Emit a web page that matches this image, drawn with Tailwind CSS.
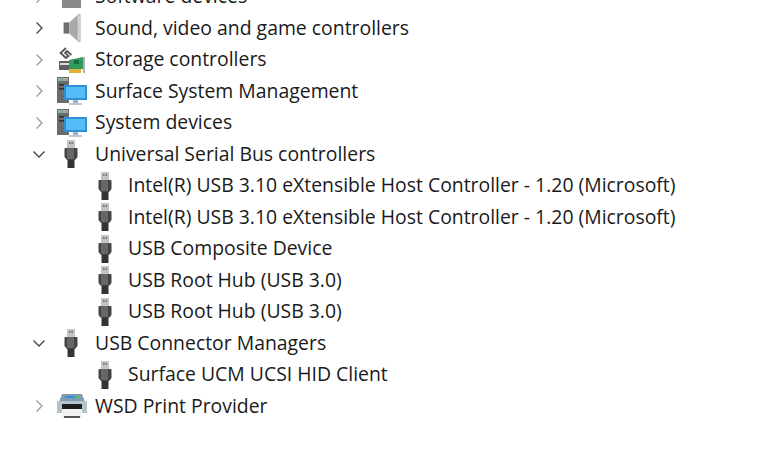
<!DOCTYPE html>
<html lang="en">
  <head>
    <meta charset="UTF-8" />
    <title>Device Manager</title>
    <script src="https://cdn.jsdelivr.net/npm/@tailwindcss/browser@4"></script>
  </head>
  <body class="bg-white h-[472px] w-[780px] overflow-hidden font-['Open_Sans',sans-serif] text-[19.4px] text-[#1a1a1a]">
    <svg class="hidden">
      <symbol id="usb" viewBox="0 0 14 28">
        <path d="M3 0h8v8H3z" fill="#c4c4c4" />
        <path d="M5 2h1.500v2H5zM7.500 2H9v2H7.500z" fill="#777" />
        <path d="M0.500 9q0-1 1-1h11q1 0 1 1v8l-2.500 3H3l-2.500-3z" fill="#444" />
        <path d="M3 8h7v11H3z" fill="#666" />
        <path d="M3.500 20h7v8h-7z" fill="#333" />
      </symbol>
      <symbol id="computer" viewBox="0 0 30 28">
        <path d="M0 0h12v26H0z" fill="#6b6b6b" />
        <path d="M1 1h10v3H1z" fill="#a5a5a5" />
        <path d="M4 2h2v2H4z" fill="#3fd04f" />
        <path d="M2 7h5v1.500H2zM2 11h5v1.500H2z" fill="#2f2f2f" />
        <path d="M7 8h23v15H7z" fill="#2f8fd8" />
        <path d="M9 10h19v11H9z" fill="#55bdf5" />
        <path d="M16 23h5v3h-5z" fill="#9fb4c4" />
        <path d="M12 26h13v2H12z" fill="#b9cbd8" />
      </symbol>
      <symbol id="speaker" viewBox="0 0 18 30">
        <path d="M0 9h6v12H0z" fill="#6f6f6f" />
        <path d="M6 9 16 0h2v30h-2L6 21z" fill="#a9a9a9" />
        <path d="M15 1h3v28h-3z" fill="#d0d0d0" />
      </symbol>
      <symbol id="storage" viewBox="0 0 26 26">
        <path d="M7 1 1.500 6 7 11l2.500-2L6 6l2-2 4.500 4" fill="none" stroke="#555" stroke-width="1.800" />
        <path d="M0 14h12v9H0z" fill="#5f5f5f" />
        <path d="M1 16h10v2H1z" fill="#dcdcdc" />
        <path d="M10 13 24 10v12H10z" fill="#2f9a5c" />
        <path d="M15 13h5v4h-5z" fill="#1d6b40" />
        <path d="M10 22h12v4H10z" fill="#e3b23c" />
        <path d="M24 10h2v16h-2z" fill="#b0b0b0" />
      </symbol>
      <symbol id="printer" viewBox="0 0 30 24">
        <path d="M5 0h20l3 8H2z" fill="#7f9cb0" />
        <path d="M8 2h10v2H8z" fill="#2f8fd8" />
        <path d="M18 2h5v2h-5z" fill="#4fc36b" />
        <path d="M0 7h30v12H0z" fill="#b6c4ce" />
        <path d="M5 10h20v6H5z" fill="#1f1f1f" />
        <path d="M5 15h20v9H5z" fill="#f2f2f2" />
        <path d="M7 22h16v2H7z" fill="#555" />
      </symbol>
    </svg>

    <ul class="-mt-[19.25px]">
      <li class="flex items-center h-[31.500px] pl-[33px]">
        <svg class="w-3 h-3 text-[#9a9a9a]" viewBox="0 0 12 12" fill="none" stroke="currentColor" stroke-width="1.300"><path d="M3.500 0.500 9 6l-5.500 5.500" /></svg>
        <div class="w-[50px] flex justify-center pl-[2px]"><div class="w-[19px] h-[23px] bg-[#8a8a8a]"></div></div>
        <span class="pb-[1px]">Software devices</span>
      </li>
      <li class="flex items-center h-[31.500px] pl-[33px]">
        <svg class="w-3 h-3 text-[#404040]" viewBox="0 0 12 12" fill="none" stroke="currentColor" stroke-width="1.300"><path d="M3.500 0.500 9 6l-5.500 5.500" /></svg>
        <div class="w-[50px] flex justify-center pl-[4px]"><svg class="w-[18px] h-[28px] blur-[0.4px]"><use href="#speaker" /></svg></div>
        <span class="pb-[1px]">Sound, video and game controllers</span>
      </li>
      <li class="flex items-center h-[31.500px] pl-[33px]">
        <svg class="w-3 h-3 text-[#9a9a9a]" viewBox="0 0 12 12" fill="none" stroke="currentColor" stroke-width="1.300"><path d="M3.500 0.500 9 6l-5.500 5.500" /></svg>
        <div class="w-[50px] flex justify-center pl-[4px]"><svg class="w-[26px] h-[26px] blur-[0.4px]"><use href="#storage" /></svg></div>
        <span class="pb-[1px]">Storage controllers</span>
      </li>
      <li class="flex items-center h-[31.500px] pl-[33px]">
        <svg class="w-3 h-3 text-[#9a9a9a]" viewBox="0 0 12 12" fill="none" stroke="currentColor" stroke-width="1.300"><path d="M3.500 0.500 9 6l-5.500 5.500" /></svg>
        <div class="w-[50px] flex justify-center pl-[4px]"><svg class="w-[30px] h-[28px] blur-[0.4px]"><use href="#computer" /></svg></div>
        <span class="pb-[1px]">Surface System Management</span>
      </li>
      <li class="flex items-center h-[31.500px] pl-[33px]">
        <svg class="w-3 h-3 text-[#9a9a9a]" viewBox="0 0 12 12" fill="none" stroke="currentColor" stroke-width="1.300"><path d="M3.500 0.500 9 6l-5.500 5.500" /></svg>
        <div class="w-[50px] flex justify-center pl-[4px]"><svg class="w-[30px] h-[28px] blur-[0.4px]"><use href="#computer" /></svg></div>
        <span class="pb-[1px]">System devices</span>
      </li>
      <li class="flex items-center h-[31.500px] pl-[33px]">
        <svg class="w-3 h-3 text-[#404040]" viewBox="0 0 12 12" fill="none" stroke="currentColor" stroke-width="1.300"><path d="M0.500 3.500 6 9l5.500-5.500" /></svg>
        <div class="w-[50px] flex justify-center pl-[2px]"><svg class="w-[14px] h-[28px] blur-[0.4px]"><use href="#usb" /></svg></div>
        <span class="pb-[1px]">Universal Serial Bus controllers</span>
      </li>
      <li class="flex items-center h-[31.500px] pl-[98px]">
        <svg class="w-[14px] h-[28px] mr-[16px] blur-[0.4px]"><use href="#usb" /></svg>
        <span class="pb-[1px]">Intel(R) USB 3.10 eXtensible Host Controller - 1.20 (Microsoft)</span>
      </li>
      <li class="flex items-center h-[31.500px] pl-[98px]">
        <svg class="w-[14px] h-[28px] mr-[16px] blur-[0.4px]"><use href="#usb" /></svg>
        <span class="pb-[1px]">Intel(R) USB 3.10 eXtensible Host Controller - 1.20 (Microsoft)</span>
      </li>
      <li class="flex items-center h-[31.500px] pl-[98px]">
        <svg class="w-[14px] h-[28px] mr-[16px] blur-[0.4px]"><use href="#usb" /></svg>
        <span class="pb-[1px]">USB Composite Device</span>
      </li>
      <li class="flex items-center h-[31.500px] pl-[98px]">
        <svg class="w-[14px] h-[28px] mr-[16px] blur-[0.4px]"><use href="#usb" /></svg>
        <span class="pb-[1px]">USB Root Hub (USB 3.0)</span>
      </li>
      <li class="flex items-center h-[31.500px] pl-[98px]">
        <svg class="w-[14px] h-[28px] mr-[16px] blur-[0.4px]"><use href="#usb" /></svg>
        <span class="pb-[1px]">USB Root Hub (USB 3.0)</span>
      </li>
      <li class="flex items-center h-[31.500px] pl-[33px]">
        <svg class="w-3 h-3 text-[#404040]" viewBox="0 0 12 12" fill="none" stroke="currentColor" stroke-width="1.300"><path d="M0.500 3.500 6 9l5.500-5.500" /></svg>
        <div class="w-[50px] flex justify-center pl-[2px]"><svg class="w-[14px] h-[28px] blur-[0.4px]"><use href="#usb" /></svg></div>
        <span class="pb-[1px]">USB Connector Managers</span>
      </li>
      <li class="flex items-center h-[31.500px] pl-[98px]">
        <svg class="w-[14px] h-[28px] mr-[16px] blur-[0.4px]"><use href="#usb" /></svg>
        <span class="pb-[1px]">Surface UCM UCSI HID Client</span>
      </li>
      <li class="flex items-center h-[31.500px] pl-[33px]">
        <svg class="w-3 h-3 text-[#9a9a9a]" viewBox="0 0 12 12" fill="none" stroke="currentColor" stroke-width="1.300"><path d="M3.500 0.500 9 6l-5.500 5.500" /></svg>
        <div class="w-[50px] flex justify-center pl-[4px]"><svg class="w-[30px] h-[24px] blur-[0.4px]"><use href="#printer" /></svg></div>
        <span class="pb-[1px]">WSD Print Provider</span>
      </li>
    </ul>
  </body>
</html>
